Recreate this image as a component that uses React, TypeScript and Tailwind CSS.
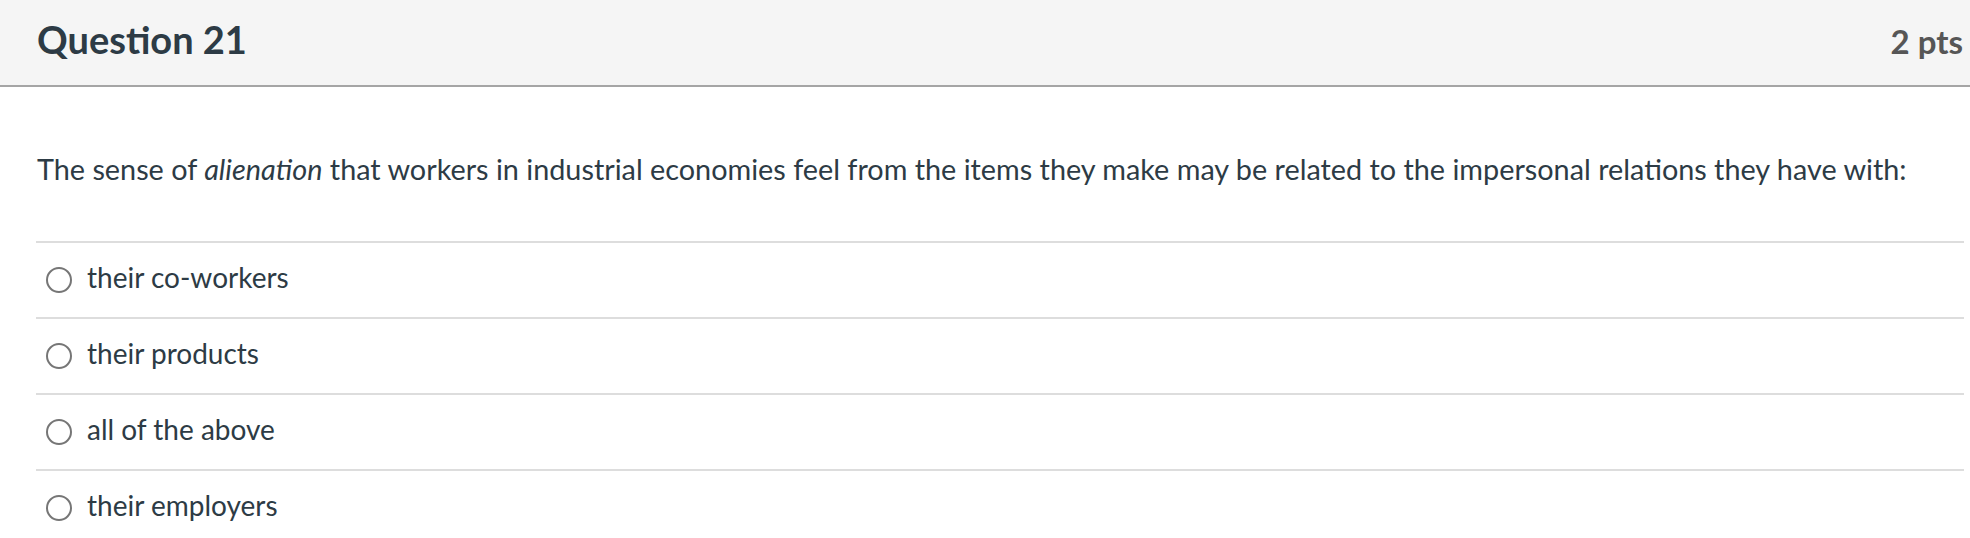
import React from 'react';

const options = ['their co-workers', 'their products', 'all of the above', 'their employers'];

export default function App() {
  return (
    <div className="w-[1970px] h-[538px] overflow-hidden bg-white text-[#2d3b45]" style={{ fontFamily: 'Lato, "Liberation Sans", sans-serif' }}>
      {/* Header */}
      <div className="h-[87px] bg-[#f5f5f5] border-b-2 border-[#a5a5a5] flex items-baseline justify-between pt-[20px] pl-[37px] pr-[7px]">
        <span className="text-[38px] leading-[38px] font-bold">Question 21</span>
        <span className="text-[33px] leading-[33px] font-bold text-[#565656]">2 pts</span>
      </div>

      <div className="pl-[36px] pr-[6px]">
        <p className="text-[28.8px] leading-[42px] pt-[61px] pb-[51px] pl-px">
          The sense of <em>alienation</em> that workers in industrial economies feel from the items they make may be related to the impersonal relations they have with:
        </p>

        <div>
          {options.map(o => (
            <div key={o} className="h-[76px] border-t-2 border-[#dddddd] flex items-center">
              <span className="ml-[10px] w-[26px] h-[26px] rounded-full border-[2px] border-[#767676] shrink-0" />
              <span className="ml-[15px] mb-[7px] text-[28px] leading-[40px]">{o}</span>
            </div>
          ))}
        </div>
      </div>
    </div>
  );
}
